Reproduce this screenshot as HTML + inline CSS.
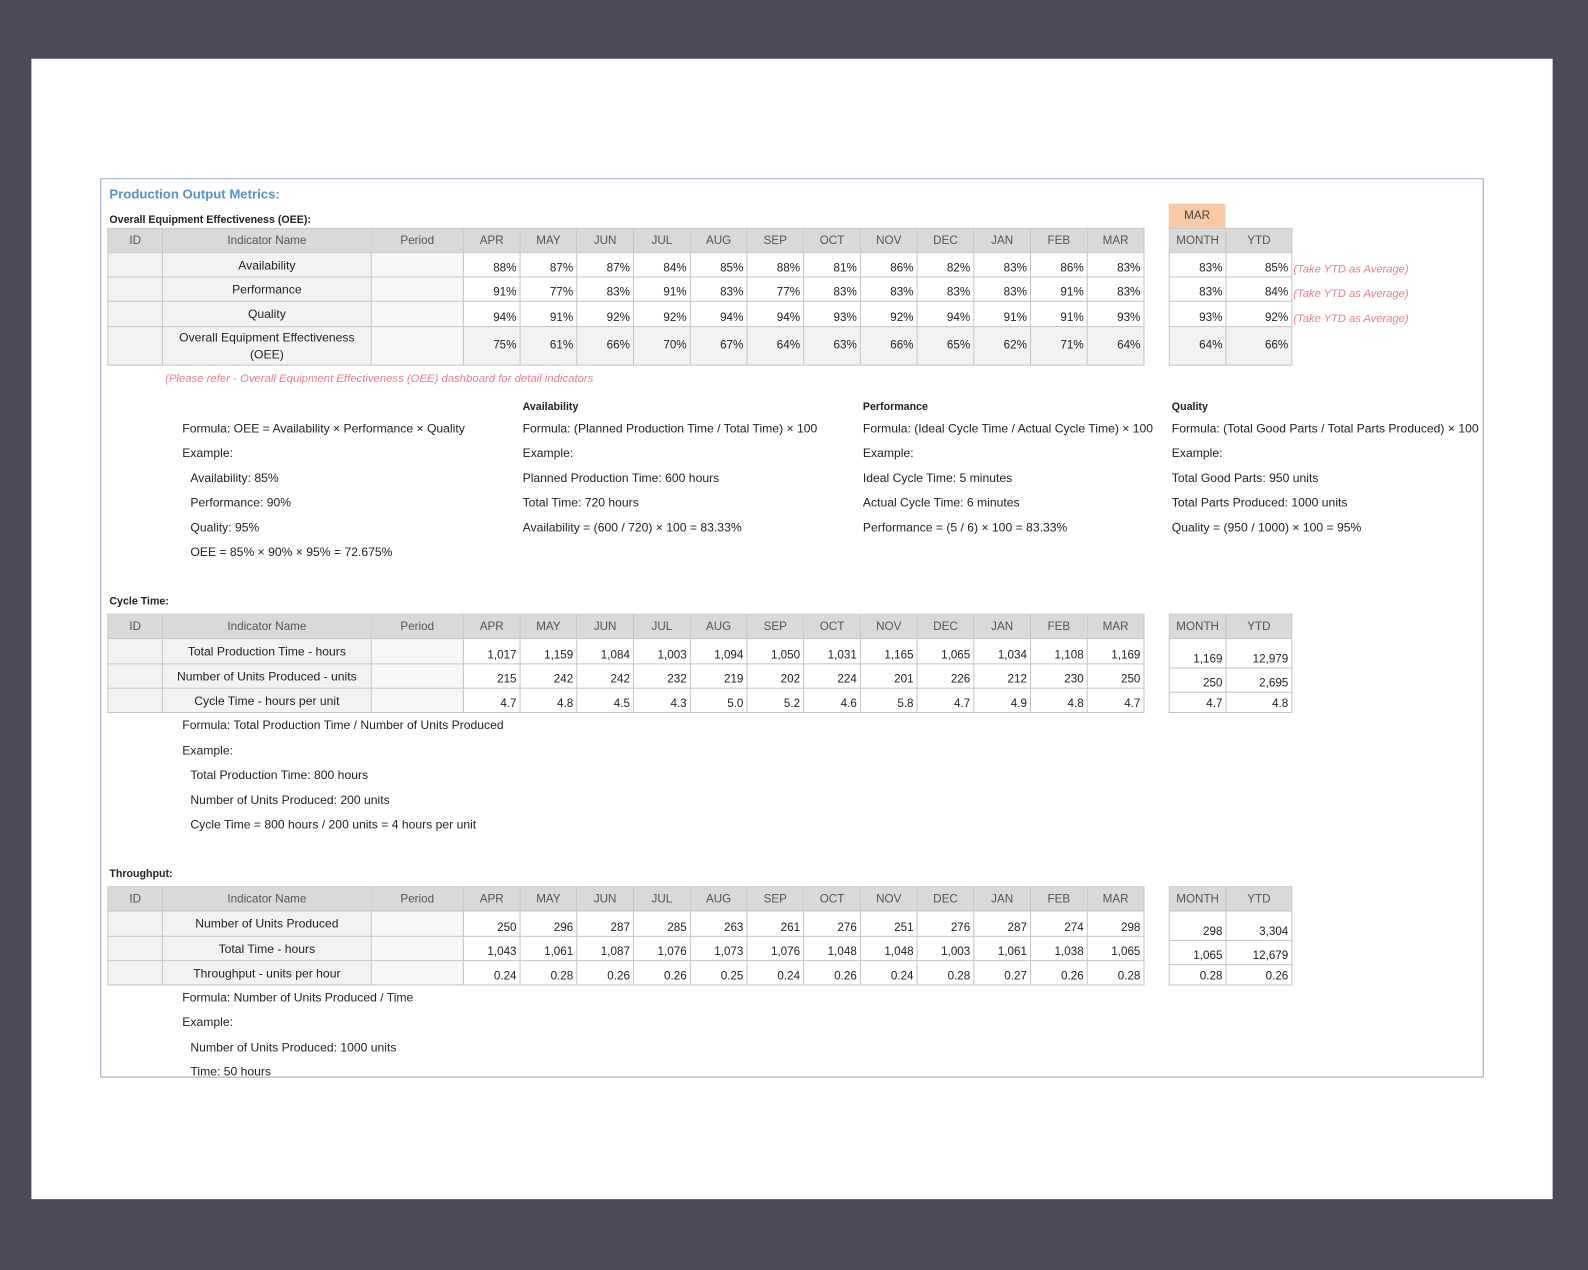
<!DOCTYPE html>
<html><head><meta charset="utf-8">
<style>
html,body{margin:0;padding:0;background:#4b4a58;width:1588px;height:1270px;overflow:hidden}
#w{position:absolute;left:0;top:0;width:1568px;height:1254px;transform:scale(1.0128);transform-origin:0 0;font-family:"Liberation Sans",sans-serif;color:#222}
#page{position:absolute;left:31px;top:58px;width:1502px;height:1126px;background:#fff}
#frame{position:absolute;left:99px;top:176px;width:1366px;height:888px;border:1px solid #97a7c3;box-sizing:border-box}
.a{position:absolute;font-size:12px;white-space:nowrap;line-height:13px}
.b{font-weight:bold;font-size:10.5px}
.title{color:#5592cf;font-size:13px;font-weight:bold}
.red{color:#e8808a;font-style:italic;font-size:11.2px}
.red2{color:#e8808a;font-style:italic;font-size:11px}
table{position:absolute;border-collapse:collapse;table-layout:fixed;font-size:11.5px}
td{border:1px solid #c4c4c4;padding:0 3px;white-space:nowrap;overflow:hidden}
tr.h td{background:#d9d9d9;color:#555;text-align:center;height:23px}
td.g{background:#f2f2f2;text-align:center;font-size:12px}
td.p{background:#f7f7f7}
td.v{background:#fff;text-align:right;vertical-align:bottom;padding-bottom:2px}
tr.o td.v{background:#f2f2f2;vertical-align:middle}
</style></head><body><div id="w">
<div id="page"></div>
<div id="frame"></div>
<div class="a title" style="left:108px;top:185px">Production Output Metrics:</div>
<div class="a b" style="left:108px;top:211px">Overall Equipment Effectiveness (OEE):</div>
<div class="a" style="left:1154px;top:201px;width:56px;height:24px;background:#f9c8a4;text-align:center;line-height:24px;color:#444;font-size:11.5px">MAR</div>

<table style="left:106px;top:225px;width:1024px">
<colgroup><col style="width:54px"><col style="width:206px"><col style="width:91px"><col span="12" style="width:56px"></colgroup>
<tr class="h"><td>ID</td><td>Indicator Name</td><td>Period</td><td>APR</td><td>MAY</td><td>JUN</td><td>JUL</td><td>AUG</td><td>SEP</td><td>OCT</td><td>NOV</td><td>DEC</td><td>JAN</td><td>FEB</td><td>MAR</td></tr>
<tr style="height:24px"><td class="g"></td><td class="g">Availability</td><td class="p"></td><td class="v">88%</td><td class="v">87%</td><td class="v">87%</td><td class="v">84%</td><td class="v">85%</td><td class="v">88%</td><td class="v">81%</td><td class="v">86%</td><td class="v">82%</td><td class="v">83%</td><td class="v">86%</td><td class="v">83%</td></tr>
<tr style="height:24px"><td class="g"></td><td class="g">Performance</td><td class="p"></td><td class="v">91%</td><td class="v">77%</td><td class="v">83%</td><td class="v">91%</td><td class="v">83%</td><td class="v">77%</td><td class="v">83%</td><td class="v">83%</td><td class="v">83%</td><td class="v">83%</td><td class="v">91%</td><td class="v">83%</td></tr>
<tr style="height:25px"><td class="g"></td><td class="g">Quality</td><td class="p"></td><td class="v">94%</td><td class="v">91%</td><td class="v">92%</td><td class="v">92%</td><td class="v">94%</td><td class="v">94%</td><td class="v">93%</td><td class="v">92%</td><td class="v">94%</td><td class="v">91%</td><td class="v">91%</td><td class="v">93%</td></tr>
<tr class="o" style="height:38px"><td class="g"></td><td class="g" style="line-height:17px">Overall Equipment Effectiveness<br>(OEE)</td><td class="p"></td><td class="v">75%</td><td class="v">61%</td><td class="v">66%</td><td class="v">70%</td><td class="v">67%</td><td class="v">64%</td><td class="v">63%</td><td class="v">66%</td><td class="v">65%</td><td class="v">62%</td><td class="v">71%</td><td class="v">64%</td></tr>
</table>
<table style="left:1154px;top:225px;width:121px">
<colgroup><col style="width:56px"><col style="width:65px"></colgroup>
<tr class="h"><td>MONTH</td><td>YTD</td></tr>
<tr style="height:24px"><td class="v">83%</td><td class="v">85%</td></tr>
<tr style="height:24px"><td class="v">83%</td><td class="v">84%</td></tr>
<tr style="height:25px"><td class="v">93%</td><td class="v">92%</td></tr>
<tr class="o" style="height:38px"><td class="v">64%</td><td class="v">66%</td></tr>
</table>
<div class="a red2" style="left:1277px;top:260px">(Take YTD as Average)</div>
<div class="a red2" style="left:1277px;top:284px">(Take YTD as Average)</div>
<div class="a red2" style="left:1277px;top:309px">(Take YTD as Average)</div>
<div class="a red" style="left:163px;top:368px">(Please refer - Overall Equipment Effectiveness (OEE) dashboard for detail indicators</div>

<div class="a" style="left:180px;top:417px">Formula: OEE = Availability × Performance × Quality</div>
<div class="a" style="left:180px;top:441px">Example:</div>
<div class="a" style="left:188px;top:466px">Availability: 85%</div>
<div class="a" style="left:188px;top:490px">Performance: 90%</div>
<div class="a" style="left:188px;top:515px">Quality: 95%</div>
<div class="a" style="left:188px;top:539px">OEE = 85% × 90% × 95% = 72.675%</div>

<div class="a b" style="left:516px;top:396px">Availability</div>
<div class="a" style="left:516px;top:417px">Formula: (Planned Production Time / Total Time) × 100</div>
<div class="a" style="left:516px;top:441px">Example:</div>
<div class="a" style="left:516px;top:466px">Planned Production Time: 600 hours</div>
<div class="a" style="left:516px;top:490px">Total Time: 720 hours</div>
<div class="a" style="left:516px;top:515px">Availability = (600 / 720) × 100 = 83.33%</div>

<div class="a b" style="left:852px;top:396px">Performance</div>
<div class="a" style="left:852px;top:417px">Formula: (Ideal Cycle Time / Actual Cycle Time) × 100</div>
<div class="a" style="left:852px;top:441px">Example:</div>
<div class="a" style="left:852px;top:466px">Ideal Cycle Time: 5 minutes</div>
<div class="a" style="left:852px;top:490px">Actual Cycle Time: 6 minutes</div>
<div class="a" style="left:852px;top:515px">Performance = (5 / 6) × 100 = 83.33%</div>

<div class="a b" style="left:1157px;top:396px">Quality</div>
<div class="a" style="left:1157px;top:417px">Formula: (Total Good Parts / Total Parts Produced) × 100</div>
<div class="a" style="left:1157px;top:441px">Example:</div>
<div class="a" style="left:1157px;top:466px">Total Good Parts: 950 units</div>
<div class="a" style="left:1157px;top:490px">Total Parts Produced: 1000 units</div>
<div class="a" style="left:1157px;top:515px">Quality = (950 / 1000) × 100 = 95%</div>

<div class="a b" style="left:108px;top:588px">Cycle Time:</div>
<table style="left:106px;top:606px;width:1024px">
<colgroup><col style="width:54px"><col style="width:206px"><col style="width:91px"><col span="12" style="width:56px"></colgroup>
<tr class="h"><td>ID</td><td>Indicator Name</td><td>Period</td><td>APR</td><td>MAY</td><td>JUN</td><td>JUL</td><td>AUG</td><td>SEP</td><td>OCT</td><td>NOV</td><td>DEC</td><td>JAN</td><td>FEB</td><td>MAR</td></tr>
<tr style="height:25px"><td class="g"></td><td class="g">Total Production Time - hours</td><td class="p"></td><td class="v">1,017</td><td class="v">1,159</td><td class="v">1,084</td><td class="v">1,003</td><td class="v">1,094</td><td class="v">1,050</td><td class="v">1,031</td><td class="v">1,165</td><td class="v">1,065</td><td class="v">1,034</td><td class="v">1,108</td><td class="v">1,169</td></tr>
<tr style="height:24px"><td class="g"></td><td class="g">Number of Units Produced - units</td><td class="p"></td><td class="v">215</td><td class="v">242</td><td class="v">242</td><td class="v">232</td><td class="v">219</td><td class="v">202</td><td class="v">224</td><td class="v">201</td><td class="v">226</td><td class="v">212</td><td class="v">230</td><td class="v">250</td></tr>
<tr style="height:24px"><td class="g"></td><td class="g">Cycle Time - hours per unit</td><td class="p"></td><td class="v">4.7</td><td class="v">4.8</td><td class="v">4.5</td><td class="v">4.3</td><td class="v">5.0</td><td class="v">5.2</td><td class="v">4.6</td><td class="v">5.8</td><td class="v">4.7</td><td class="v">4.9</td><td class="v">4.8</td><td class="v">4.7</td></tr>
</table>
<table style="left:1154px;top:606px;width:121px">
<colgroup><col style="width:56px"><col style="width:65px"></colgroup>
<tr class="h"><td>MONTH</td><td>YTD</td></tr>
<tr style="height:29px"><td class="v">1,169</td><td class="v">12,979</td></tr>
<tr style="height:24px"><td class="v">250</td><td class="v">2,695</td></tr>
<tr style="height:20px"><td class="v">4.7</td><td class="v">4.8</td></tr>
</table>
<div class="a" style="left:180px;top:710px">Formula: Total Production Time / Number of Units Produced</div>
<div class="a" style="left:180px;top:735px">Example:</div>
<div class="a" style="left:188px;top:759px">Total Production Time: 800 hours</div>
<div class="a" style="left:188px;top:784px">Number of Units Produced: 200 units</div>
<div class="a" style="left:188px;top:808px">Cycle Time = 800 hours / 200 units = 4 hours per unit</div>

<div class="a b" style="left:108px;top:857px">Throughput:</div>
<table style="left:106px;top:875px;width:1024px">
<colgroup><col style="width:54px"><col style="width:206px"><col style="width:91px"><col span="12" style="width:56px"></colgroup>
<tr class="h"><td>ID</td><td>Indicator Name</td><td>Period</td><td>APR</td><td>MAY</td><td>JUN</td><td>JUL</td><td>AUG</td><td>SEP</td><td>OCT</td><td>NOV</td><td>DEC</td><td>JAN</td><td>FEB</td><td>MAR</td></tr>
<tr style="height:25px"><td class="g"></td><td class="g">Number of Units Produced</td><td class="p"></td><td class="v">250</td><td class="v">296</td><td class="v">287</td><td class="v">285</td><td class="v">263</td><td class="v">261</td><td class="v">276</td><td class="v">251</td><td class="v">276</td><td class="v">287</td><td class="v">274</td><td class="v">298</td></tr>
<tr style="height:24px"><td class="g"></td><td class="g">Total Time - hours</td><td class="p"></td><td class="v">1,043</td><td class="v">1,061</td><td class="v">1,087</td><td class="v">1,076</td><td class="v">1,073</td><td class="v">1,076</td><td class="v">1,048</td><td class="v">1,048</td><td class="v">1,003</td><td class="v">1,061</td><td class="v">1,038</td><td class="v">1,065</td></tr>
<tr style="height:24px"><td class="g"></td><td class="g">Throughput - units per hour</td><td class="p"></td><td class="v">0.24</td><td class="v">0.28</td><td class="v">0.26</td><td class="v">0.26</td><td class="v">0.25</td><td class="v">0.24</td><td class="v">0.26</td><td class="v">0.24</td><td class="v">0.28</td><td class="v">0.27</td><td class="v">0.26</td><td class="v">0.28</td></tr>
</table>
<table style="left:1154px;top:875px;width:121px">
<colgroup><col style="width:56px"><col style="width:65px"></colgroup>
<tr class="h"><td>MONTH</td><td>YTD</td></tr>
<tr style="height:29px"><td class="v">298</td><td class="v">3,304</td></tr>
<tr style="height:24px"><td class="v">1,065</td><td class="v">12,679</td></tr>
<tr style="height:20px"><td class="v">0.28</td><td class="v">0.26</td></tr>
</table>
<div class="a" style="left:180px;top:979px">Formula: Number of Units Produced / Time</div>
<div class="a" style="left:180px;top:1003px">Example:</div>
<div class="a" style="left:188px;top:1028px">Number of Units Produced: 1000 units</div>
<div class="a" style="left:188px;top:1052px">Time: 50 hours</div>
</div></body></html>
